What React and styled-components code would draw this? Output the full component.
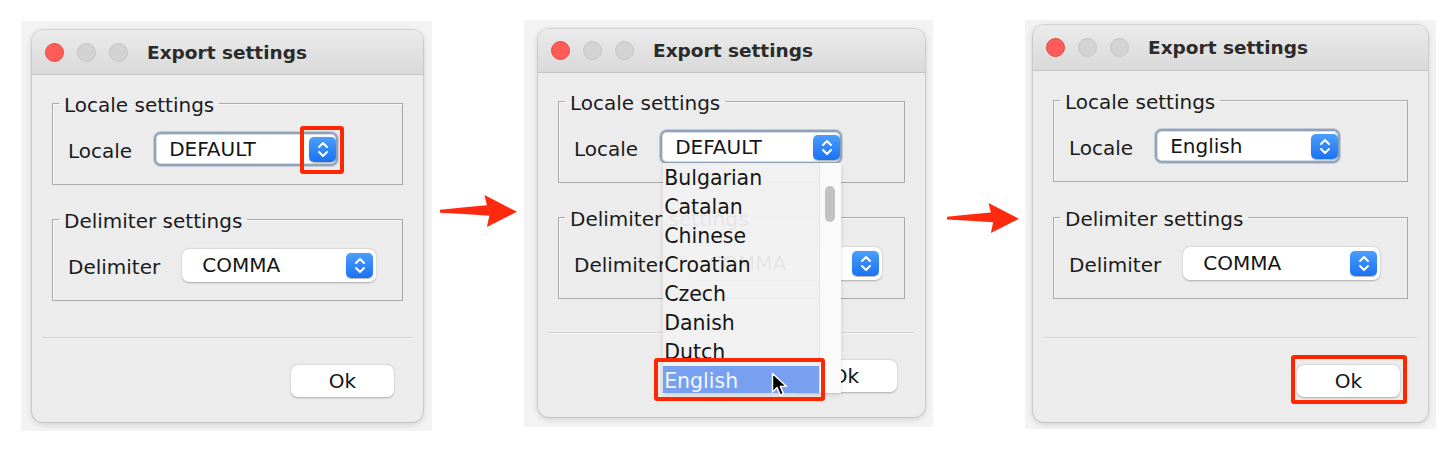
import React from 'react';
import styled, { createGlobalStyle } from 'styled-components';

const GlobalStyle = createGlobalStyle`
  html, body {
    margin: 0;
    padding: 0;
    background: #ffffff;
  }
  body {
    font-family: "DejaVu Sans", "Liberation Sans", sans-serif;
    color: #1b1b1b;
  }
`;

const Page = styled.div`
  display: flex;
  align-items: flex-start;
  width: 1454px;
  height: 454px;
  padding: 20px 0 0 21px;
  box-sizing: border-box;
`;

const Shot = styled.div`
  display: flex;
  align-items: flex-start;
  flex: none;
  box-sizing: border-box;
  width: ${(p) => p.$w}px;
  height: ${(p) => p.$h}px;
  margin-top: ${(p) => p.$top || 0}px;
  padding: ${(p) => p.$pt}px 0 0 ${(p) => p.$pl}px;
  background: #f3f3f3;
`;

const ArrowSvg = styled.svg`
  flex: none;
  margin: ${(p) => p.$top}px ${(p) => p.$mr}px 0 ${(p) => p.$ml}px;
`;

const Window = styled.div`
  display: flex;
  flex-direction: column;
  flex: none;
  width: ${(p) => p.$w}px;
  height: ${(p) => p.$h}px;
  background: #ececec;
  border-radius: 11px;
  box-shadow: 0 0 0 1px rgba(0, 0, 0, 0.1), 0 2px 7px rgba(0, 0, 0, 0.16);
`;

const TitleBar = styled.div`
  display: flex;
  align-items: center;
  flex: none;
  height: ${(p) => p.$h}px;
  padding-left: 13px;
  box-sizing: border-box;
  border-radius: 11px 11px 0 0;
  background: linear-gradient(#ebebeb, #d9d9d9);
  border-bottom: 1px solid #c6c6c6;
`;

const Lights = styled.div`
  display: flex;
  gap: 13px;
  margin-right: 19px;
`;

const Light = styled.span`
  width: 19px;
  height: 19px;
  border-radius: 50%;
  box-sizing: border-box;
  background: ${(p) => (p.$red ? '#fd5d56' : '#d3d3d3')};
  border: 1px solid ${(p) => (p.$red ? '#e24a43' : '#c5c5c5')};
`;

const Title = styled.div`
  font-size: 18.5px;
  font-weight: bold;
  color: #2b2b2b;
`;

const Group = styled.fieldset`
  margin: ${(p) => p.$mt}px 20px 0;
  padding: 15px 15px 18px;
  border: 1px solid #aaaaaa;
  box-shadow: inset 1px 1px 0 #f7f7f7;
  min-width: 0;
`;

const Legend = styled.legend`
  margin-left: -9px;
  padding: 4px 5px 0;
  font-size: 20px;
  line-height: 23px;
  color: #1b1b1b;
`;

const Row = styled.div`
  display: flex;
  align-items: center;
  gap: 22px;
  height: 34px;
`;

const Label = styled.span`
  font-size: 20px;
  padding-top: 3px;
  color: #1b1b1b;
`;

const Combo = styled.div`
  position: relative;
  display: flex;
  align-items: center;
  flex: none;
  box-sizing: border-box;
  width: ${(p) => p.$w}px;
  height: ${(p) => (p.$focus ? 34 : 33)}px;
  padding: 0 ${(p) => (p.$focus ? 0 : 3)}px 0 ${(p) => p.$pad}px;
  background: #ffffff;
  border-radius: 7px;
  border: ${(p) => (p.$focus ? '2px solid #8fa4bb' : 'none')};
  box-shadow: ${(p) =>
    p.$focus
      ? '0 0 0 1px #c3ccd6, inset 0 0 0 1px #d7dee6'
      : '0 0.5px 2px rgba(0, 0, 0, 0.28)'};
`;

const ComboText = styled.span`
  flex: 1;
  font-size: 20px;
  color: #151515;
`;

const Stepper = styled.span`
  display: flex;
  align-items: center;
  justify-content: center;
  width: 27px;
  height: 25px;
  border-radius: 5px;
  background: linear-gradient(#4c9efd, #1a72f2);
  box-shadow: 0 0.5px 1px rgba(0, 0, 0, 0.3);
`;

const Mark = styled.span`
  position: absolute;
  top: ${(p) => p.$t}px;
  left: ${(p) => p.$l}px;
  right: ${(p) => p.$r}px;
  bottom: ${(p) => p.$b}px;
  border: 4px solid #ff2600;
  border-radius: 3px;
  pointer-events: none;
  z-index: 3;
`;

const Menu = styled.div`
  position: absolute;
  top: calc(100% + 1px);
  left: 1px;
  width: 178px;
  height: 230px;
  display: flex;
  background: rgba(241, 241, 241, 0.94);
  z-index: 2;
  box-shadow: 0 2px 5px rgba(0, 0, 0, 0.12);
`;

const MenuList = styled.div`
  display: flex;
  flex-direction: column;
  flex: 1;
  height: 100%;
  overflow: hidden;
`;

const MenuItem = styled.div`
  flex: none;
  height: 29px;
  line-height: 30px;
  padding-left: 1px;
  font-size: 20.5px;
  color: ${(p) => (p.$active ? '#f2f6ff' : '#161616')};
  background: ${(p) => (p.$active ? '#77a0f0' : 'transparent')};
`;

const ScrollTrack = styled.div`
  flex: none;
  width: 22px;
  box-sizing: border-box;
  padding: 23px 0 0 5px;
  background: rgba(250, 250, 250, 0.96);
  border-left: 1px solid #e3e3e3;
`;

const Thumb = styled.div`
  width: 10px;
  height: 36px;
  border-radius: 5px;
  background: #c2c2c2;
`;

const CursorSvg = styled.svg`
  position: absolute;
  left: 108px;
  top: 209px;
  z-index: 4;
`;

const Footer = styled.div`
  margin-top: auto;
  display: flex;
  flex-direction: column;
`;

const Separator = styled.div`
  height: 1px;
  margin: 0 11px 0 10px;
  background: #d2d2d2;
  box-shadow: 0 1px 0 #f6f6f6;
`;

const ButtonRow = styled.div`
  display: flex;
  justify-content: flex-end;
  padding: 27px ${(p) => p.$pr}px 25px 0;
`;

const Button = styled.div`
  position: relative;
  display: flex;
  align-items: center;
  justify-content: center;
  width: 103px;
  height: 32px;
  background: #ffffff;
  border-radius: 7px;
  box-shadow: 0 0.5px 2px rgba(0, 0, 0, 0.28);
  font-size: 20px;
  color: #151515;
`;

const languages = ['Bulgarian', 'Catalan', 'Chinese', 'Croatian', 'Czech', 'Danish', 'Dutch', 'English'];

const Chevrons = () => (
  <svg width="14" height="19" viewBox="0 0 14 19">
    <path d="M3 7 L7 3 L11 7" fill="none" stroke="#fff" strokeWidth="2" strokeLinecap="round" strokeLinejoin="round" />
    <path d="M3 12 L7 16 L11 12" fill="none" stroke="#fff" strokeWidth="2" strokeLinecap="round" strokeLinejoin="round" />
  </svg>
);

const Arrow = ({ w, h, top, ml, mr }) => (
  <ArrowSvg width={w} height={h} viewBox="0 0 78 33" preserveAspectRatio="none" $top={top} $ml={ml} $mr={mr}>
    <path d="M0 15.2 Q24 12.5 47.5 10.5 L45 0 L78 17.3 L47.5 33 L50 21.3 Q24 19.2 0 18.2 Z" fill="#ff2a0e" />
  </ArrowSvg>
);

const Cursor = () => (
  <CursorSvg width="19" height="25" viewBox="0 0 19 25">
    <path
      d="M1.5 1.5 L1.5 20 L6 15.6 L9.2 23 L12.4 21.6 L9.3 14.4 L15.6 14.4 Z"
      fill="#000"
      stroke="#fff"
      strokeWidth="1.4"
      strokeLinejoin="round"
    />
  </CursorSvg>
);

const Dialog = ({ w, h, barH, gap1, gap2, btnRight, locale, localeW, commaW, openMenu, markStepper, markOk }) => (
  <Window $w={w} $h={h}>
    <TitleBar $h={barH}>
      <Lights>
        <Light $red />
        <Light />
        <Light />
      </Lights>
      <Title>Export settings</Title>
    </TitleBar>

    <Group $mt={gap1}>
      <Legend>Locale settings</Legend>
      <Row>
        <Label>Locale</Label>
        <Combo $w={localeW} $focus $pad={13}>
          <ComboText>{locale}</ComboText>
          <Stepper>
            <Chevrons />
          </Stepper>
          {markStepper && <Mark $t={-8} $l={144} $r={-8} $b={-10} />}
          {openMenu && (
            <Menu>
              <MenuList>
                {languages.map((name) => (
                  <MenuItem key={name} $active={name === 'English'}>
                    {name}
                  </MenuItem>
                ))}
              </MenuList>
              <ScrollTrack>
                <Thumb />
              </ScrollTrack>
              <Mark $t={195} $l={-9} $r={16} $b={-8} />
              <Cursor />
            </Menu>
          )}
        </Combo>
      </Row>
    </Group>

    <Group $mt={gap2}>
      <Legend>Delimiter settings</Legend>
      <Row>
        <Label>Delimiter</Label>
        <Combo $w={commaW} $pad={20}>
          <ComboText>COMMA</ComboText>
          <Stepper>
            <Chevrons />
          </Stepper>
        </Combo>
      </Row>
    </Group>

    <Footer>
      <Separator />
      <ButtonRow $pr={btnRight}>
        <Button>
          Ok
          {markOk && <Mark $t={-10} $l={-6} $r={-7} $b={-7} />}
        </Button>
      </ButtonRow>
    </Footer>
  </Window>
);

export default function App() {
  return (
    <>
      <GlobalStyle />
      <Page>
        <Shot $w={411} $h={410} $top={1} $pt={9} $pl={11}>
          <Dialog
            w={391}
            h={392}
            barH={45}
            gap1={15}
            gap2={21}
            btnRight={29}
            locale="DEFAULT"
            localeW={184}
            commaW={194}
            markStepper
          />
        </Shot>
        <Arrow w={77} h={32} top={175} ml={8} mr={7} />
        <Shot $w={409} $h={407} $pt={9} $pl={14}>
          <Dialog
            w={387}
            h={388}
            barH={44}
            gap1={15}
            gap2={21}
            btnRight={28}
            locale="DEFAULT"
            localeW={182}
            commaW={194}
            openMenu
          />
        </Shot>
        <Arrow w={72} h={30} top={183} ml={14} mr={6} />
        <Shot $w={411} $h={409} $pt={5} $pl={8}>
          <Dialog
            w={395}
            h={397}
            barH={46}
            gap1={16}
            gap2={22}
            btnRight={28}
            locale="English"
            localeW={185}
            commaW={197}
            markOk
          />
        </Shot>
      </Page>
    </>
  );
}
